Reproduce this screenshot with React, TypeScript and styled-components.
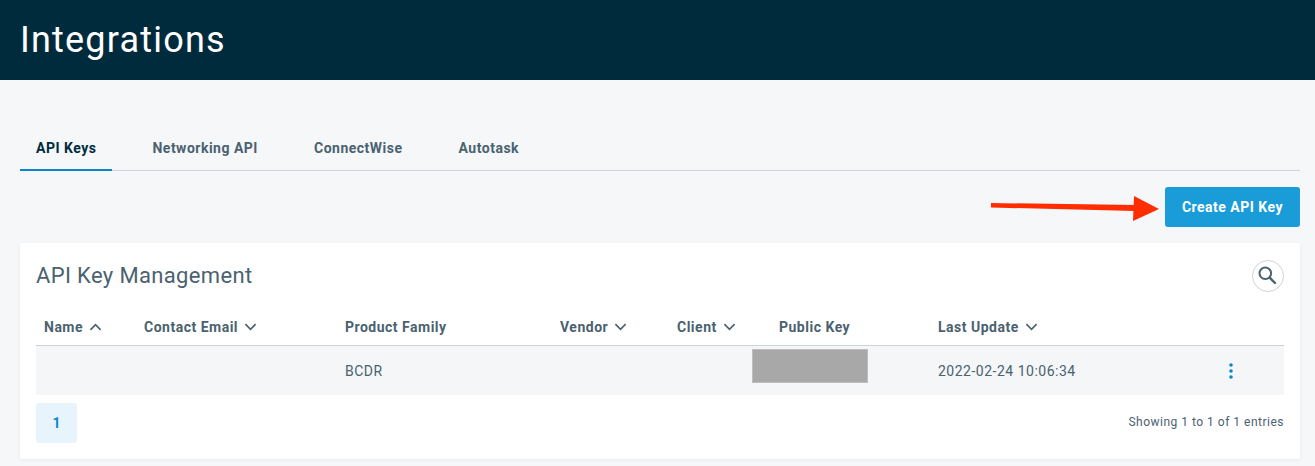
import React from "react";
import styled, { createGlobalStyle } from "styled-components";

const Global = createGlobalStyle`
  html, body { margin: 0; padding: 0; background: #f5f7f9; }
  body { font-family: Roboto, "Liberation Sans", sans-serif; color: #4a6270; }
  * { box-sizing: border-box; }
`;

const Page = styled.div`
  position: relative;
  width: 1315px;
  height: 466px;
  overflow: hidden;
  background: #f5f7f9;
`;

const Header = styled.header`
  height: 80px;
  background: #002b3d;
  padding: 0 20px;
  display: flex;
  align-items: center;
`;

const Title = styled.h1`
  margin: 0;
  font-family: Roboto, sans-serif;
  font-weight: 400;
  font-size: 36px;
  letter-spacing: 1.2px;
  color: #fff;
`;

const Main = styled.main`
  padding: 46px 15px 0 20px;
`;

const Tabs = styled.nav`
  display: flex;
  gap: 24px;
  height: 45px;
  border-bottom: 1px solid #ced4d9;
`;

const Tab = styled.div<{ $active?: boolean }>`
  padding: 0 16px;
  height: 45px;
  line-height: 44px;
  font-size: 14px;
  font-weight: 700;
  letter-spacing: 0.5px;
  color: ${(p) => (p.$active ? "#002b3d" : "#4a6270")};
  border-bottom: 2px solid ${(p) => (p.$active ? "#0a86c9" : "transparent")};
`;

const Actions = styled.div`
  display: flex;
  justify-content: flex-end;
  padding: 16px 0;
`;

const CreateButton = styled.button`
  width: 135px;
  height: 40px;
  border: 0;
  border-radius: 3px;
  background: #1a9cd9;
  color: #fff;
  font-family: Roboto, sans-serif;
  font-size: 14px;
  font-weight: 700;
  letter-spacing: 0.5px;
`;

const Panel = styled.section`
  background: #fff;
  height: 216px;
  padding: 0 16px;
  box-shadow: 0 1px 4px rgba(0, 30, 50, 0.06);
`;

const PanelHead = styled.div`
  height: 64px;
  display: flex;
  align-items: center;
  justify-content: space-between;
`;

const PanelTitle = styled.h2`
  margin: 0;
  font-weight: 400;
  font-size: 22px;
  letter-spacing: 0.35px;
  color: #4a6270;
`;

const SearchButton = styled.div`
  width: 32px;
  height: 32px;
  margin-top: 2px;
  padding: 0 2px 2px 0;
  border: 1px solid #ced4d9;
  border-radius: 50%;
  display: flex;
  align-items: center;
  justify-content: center;
`;

const Columns = "100px 201px 215px 117px 102px 159px 1fr 60px";

const HeadRow = styled.div`
  display: grid;
  grid-template-columns: ${Columns};
  height: 39px;
  border-bottom: 1px solid #ced4d9;
`;

const HeadCell = styled.div`
  padding: 2px 8px 0;
  display: flex;
  align-items: center;
  gap: 6px;
  height: 38px;
  font-size: 14px;
  font-weight: 700;
  letter-spacing: 0.5px;
  color: #4a6270;
`;

const BodyRow = styled.div`
  position: relative;
  display: grid;
  grid-template-columns: ${Columns};
  height: 49px;
  background: #f4f6f8;
`;

const BodyCell = styled.div`
  padding: 1px 8px 0;
  display: flex;
  align-items: center;
  font-size: 14px;
  letter-spacing: 0.5px;
  color: #4a6270;
`;

const MenuCell = styled(BodyCell)`
  justify-content: flex-end;
  padding: 0 50px 0 0;
`;

const Redaction = styled.div`
  position: absolute;
  left: 716px;
  top: 3px;
  width: 116px;
  height: 34px;
  background: #a8a8a8;
  border: 1px solid #bdbdbd;
`;

const Footer = styled.div`
  display: flex;
  justify-content: space-between;
  align-items: center;
  padding-top: 8px;
`;

const PageButton = styled.div`
  width: 41px;
  height: 40px;
  border-radius: 3px;
  background: #e8f4fb;
  color: #0a86c9;
  font-size: 14px;
  font-weight: 700;
  display: flex;
  align-items: center;
  justify-content: center;
`;

const Entries = styled.div`
  padding-bottom: 2px;
  font-size: 12px;
  letter-spacing: 0.5px;
  color: #4a6270;
`;

const ArrowOverlay = styled.svg`
  position: absolute;
  left: 985px;
  top: 190px;
`;

const Chevron = ({ up }: { up?: boolean }) => (
  <svg width="13" height="8" viewBox="0 0 14 8" fill="none">
    <path
      d={up ? "M1.5 7 L7 1.5 L12.5 7" : "M1.5 1 L7 6.5 L12.5 1"}
      stroke="#4a6270"
      strokeWidth="1.8"
    />
  </svg>
);

const heads: { label: string; dir?: "up" | "down" }[] = [
  { label: "Name", dir: "up" },
  { label: "Contact Email", dir: "down" },
  { label: "Product Family" },
  { label: "Vendor", dir: "down" },
  { label: "Client", dir: "down" },
  { label: "Public Key" },
  { label: "Last Update", dir: "down" },
  { label: "" },
];

export default function App() {
  return (
    <Page>
      <Global />
      <Header>
        <Title>Integrations</Title>
      </Header>
      <Main>
        <Tabs>
          <Tab $active>API Keys</Tab>
          <Tab>Networking API</Tab>
          <Tab>ConnectWise</Tab>
          <Tab>Autotask</Tab>
        </Tabs>
        <Actions>
          <CreateButton>Create API Key</CreateButton>
        </Actions>
        <Panel>
          <PanelHead>
            <PanelTitle>API Key Management</PanelTitle>
            <SearchButton>
              <svg width="20" height="20" viewBox="0 0 20 20" fill="none">
                <circle cx="8.3" cy="8.3" r="5.8" stroke="#4a6270" strokeWidth="2" />
                <path d="M12.7 12.7 L18 18" stroke="#4a6270" strokeWidth="2.4" strokeLinecap="round" />
              </svg>
            </SearchButton>
          </PanelHead>
          <HeadRow>
            {heads.map((h, i) => (
              <HeadCell key={i}>
                {h.label}
                {h.dir && <Chevron up={h.dir === "up"} />}
              </HeadCell>
            ))}
          </HeadRow>
          <BodyRow>
            <BodyCell />
            <BodyCell />
            <BodyCell>BCDR</BodyCell>
            <BodyCell />
            <BodyCell />
            <BodyCell />
            <BodyCell>2022-02-24 10:06:34</BodyCell>
            <MenuCell>
              <svg width="6" height="16" viewBox="0 0 6 16" fill="#0a86c9">
                <circle cx="3" cy="2" r="1.8" />
                <circle cx="3" cy="8" r="1.8" />
                <circle cx="3" cy="14" r="1.8" />
              </svg>
            </MenuCell>
            <Redaction />
          </BodyRow>
          <Footer>
            <PageButton>1</PageButton>
            <Entries>Showing 1 to 1 of 1 entries</Entries>
          </Footer>
        </Panel>
      </Main>
      <ArrowOverlay width="175" height="40" viewBox="0 0 175 40">
        <path d="M6 13 L150 15 L150 21 L6 17.5 Z" fill="#ff2d00" />
        <path d="M149 6 L174 19 L148 31 Z" fill="#ff2d00" />
      </ArrowOverlay>
    </Page>
  );
}
